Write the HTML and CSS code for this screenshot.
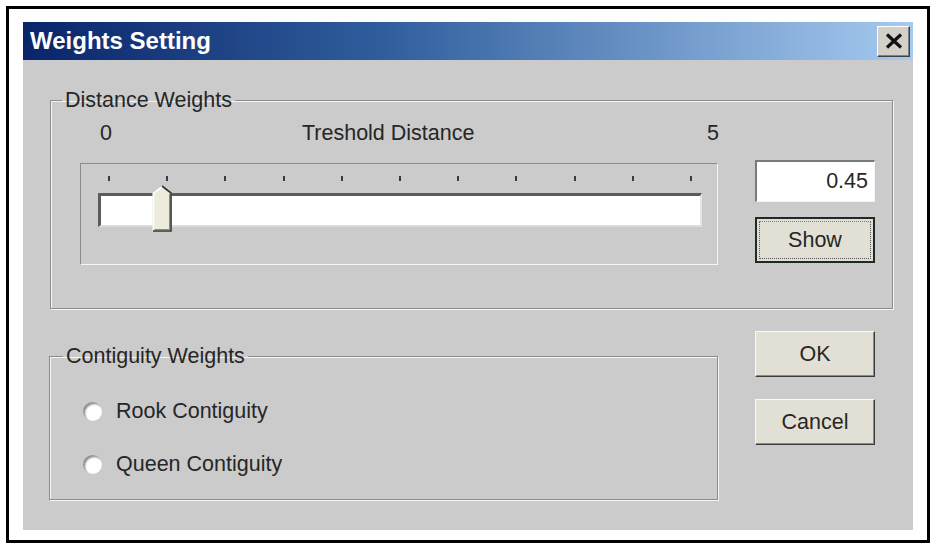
FILE: index.html
```html
<!DOCTYPE html>
<html>
<head>
<meta charset="utf-8">
<title>Weights Setting</title>
<link rel="stylesheet" href="styles.css">
</head>
<body>
<div class="frame">
  <div class="dialog">
    <div class="titlebar">
      <span class="title">Weights Setting</span>
      <button class="close" aria-label="Close">
        <svg width="18" height="16" viewBox="0 0 18 16"><path d="M2 1.5 L16 14.5 M16 1.5 L2 14.5" stroke="#111" stroke-width="3.2" fill="none"/></svg>
      </button>
    </div>
    <div class="body">
      <fieldset class="group dist">
        <legend>Distance Weights</legend>
        <div class="dist-row">
          <div class="slider-col">
            <div class="scale-labels">
              <span class="lbl-min">0</span>
              <span class="lbl-mid">Treshold Distance</span>
              <span class="lbl-max">5</span>
            </div>
            <div class="slider-box">
              <div class="ticks"><i></i><i></i><i></i><i></i><i></i><i></i><i></i><i></i><i></i><i></i><i></i></div>
              <div class="track">
                <svg class="thumb" width="20" height="47" viewBox="0 0 20 47">
                  <path d="M0.5 46.5 V8 L10 0.5 L19.5 8 V46.5 Z" fill="#ecebdc"/>
                  <path d="M1.5 45.5 V8.5 L10 1.8" stroke="#ffffff" stroke-width="1.5" fill="none"/>
                  <path d="M10 1 L19 8 V46 H1" stroke="#333" stroke-width="1.6" fill="none"/>
                  <path d="M17.5 9 V44.5 H2.5" stroke="#8a8a80" stroke-width="1" fill="none"/>
                </svg>
              </div>
            </div>
          </div>
          <div class="side-col">
            <div class="value-input">0.45</div>
            <button class="btn default"><span class="focus">Show</span></button>
          </div>
        </div>
      </fieldset>
      <div class="lower">
        <fieldset class="group contig">
          <legend>Contiguity Weights</legend>
          <div class="radios">
            <label class="radio"><span class="dot"></span>Rook Contiguity</label>
            <label class="radio second"><span class="dot"></span>Queen Contiguity</label>
          </div>
        </fieldset>
        <div class="btn-col">
          <button class="btn">OK</button>
          <button class="btn cancel">Cancel</button>
        </div>
      </div>
    </div>
  </div>
</div>
</body>
</html>
```
FILE: styles.css
```css
html, body {
  margin: 0;
  padding: 0;
  background: #ffffff;
}

.frame {
  box-sizing: border-box;
  margin: 6px 0 0 6px;
  width: 924px;
  height: 537px;
  border: 3px solid #000;
  padding: 13px 14px 10px 14px;
  background: #fff;
}

.dialog {
  width: 890px;
  height: 508px;
  background: #cbcbcb;
  display: flex;
  flex-direction: column;
  font-family: "Liberation Sans", Arial, sans-serif;
  font-size: 21.5px;
  color: #262626;
}

.titlebar {
  height: 38px;
  flex: none;
  display: flex;
  align-items: center;
  padding: 0 3px 0 7px;
  background: linear-gradient(90deg, #0a246a 0%, #2f5d9c 40%, #a6caf0 100%);
}

.title {
  flex: 1;
  color: #fff;
  font-weight: bold;
  font-size: 24px;
}

.close {
  width: 33px;
  height: 31px;
  padding: 0;
  display: flex;
  align-items: center;
  justify-content: center;
  background: #d2d0c8;
  border: 1px solid;
  border-color: #fff #404040 #404040 #fff;
  box-shadow: inset -1px -1px 0 #808080;
}

.body {
  flex: 1;
  padding: 27px 0 0 27px;
}

.group {
  margin: 0;
  padding: 0;
  min-width: 0;
  box-sizing: border-box;
  border: 1px solid #8c8c8c;
  box-shadow: 1px 1px 0 #f4f4f4, inset 1px 1px 0 #f4f4f4;
}

.group legend {
  padding: 0 3px;
  line-height: 26px;
}

.dist {
  width: 843px;
}

.dist legend {
  margin-left: 11px;
}

.dist-row {
  display: flex;
  padding: 6px 17px 43px 29px;
}

.slider-col {
  width: 638px;
}

.scale-labels {
  display: flex;
  height: 28px;
  line-height: 28px;
}

.lbl-min {
  margin-left: 20px;
}

.lbl-mid {
  margin-left: 190px;
}

.lbl-max {
  margin-left: auto;
  margin-right: -1px;
}

.slider-box {
  box-sizing: border-box;
  margin-top: 16px;
  height: 102px;
  border: 1px solid;
  border-color: #8a8a8a #f6f6f6 #f6f6f6 #8a8a8a;
  padding-top: 12px;
}

.ticks {
  display: flex;
  justify-content: space-between;
  padding: 0 25px 0 27px;
  height: 5px;
}

.ticks i {
  width: 2px;
  height: 5px;
  background: #3a3a3a;
}

.track {
  position: relative;
  box-sizing: border-box;
  margin: 12px 0 0 17px;
  width: 604px;
  height: 34px;
  background: #fff;
  border-top: 3px solid #5c5c5c;
  border-left: 3px solid #5c5c5c;
  border-bottom: 2px solid #dcdcdc;
  border-right: 2px solid #e6e6e6;
}

.thumb {
  position: absolute;
  left: 51px;
  top: -11px;
}

.side-col {
  margin-left: 37px;
  width: 120px;
  padding-top: 41px;
}

.value-input {
  box-sizing: border-box;
  height: 42px;
  line-height: 38px;
  background: #fff;
  border-top: 2px solid #7a7a7a;
  border-left: 2px solid #7a7a7a;
  border-bottom: 1px solid #f4f4f4;
  border-right: 1px solid #f4f4f4;
  text-align: right;
  padding-right: 6px;
}

.btn {
  display: block;
  box-sizing: border-box;
  width: 120px;
  height: 46px;
  padding: 0;
  font: inherit;
  color: #262626;
  background: #e2e0d4;
  border: 1px solid;
  border-color: #fafafa #3c3c3c #3c3c3c #fafafa;
  box-shadow: inset -1px -1px 0 #8a8a84;
}

.btn.default {
  margin-top: 15px;
  border: 2px solid #1e2a26;
  box-shadow: none;
  padding: 2px;
}

.btn .focus {
  display: block;
  height: 100%;
  box-sizing: border-box;
  line-height: 36px;
  border: 1px dotted #555;
  border-top-color: #777;
}

.lower {
  display: flex;
  margin-top: 22px;
}

.contig {
  margin: 12px 0 0 -1px;
  width: 669px;
}

.contig legend {
  margin-left: 13px;
}

.radios {
  padding: 28px 0 21px 33px;
}

.radio {
  display: flex;
  align-items: center;
  height: 28px;
  gap: 14px;
}

.radio.second {
  margin-top: 25px;
}

.dot {
  width: 19px;
  height: 19px;
  border-radius: 50%;
  background: #fff;
  box-shadow: inset 2px 2px 2px rgba(0, 0, 0, 0.45);
}

.btn-col {
  margin-left: 37px;
}

.btn.cancel {
  margin-top: 22px;
}
```
